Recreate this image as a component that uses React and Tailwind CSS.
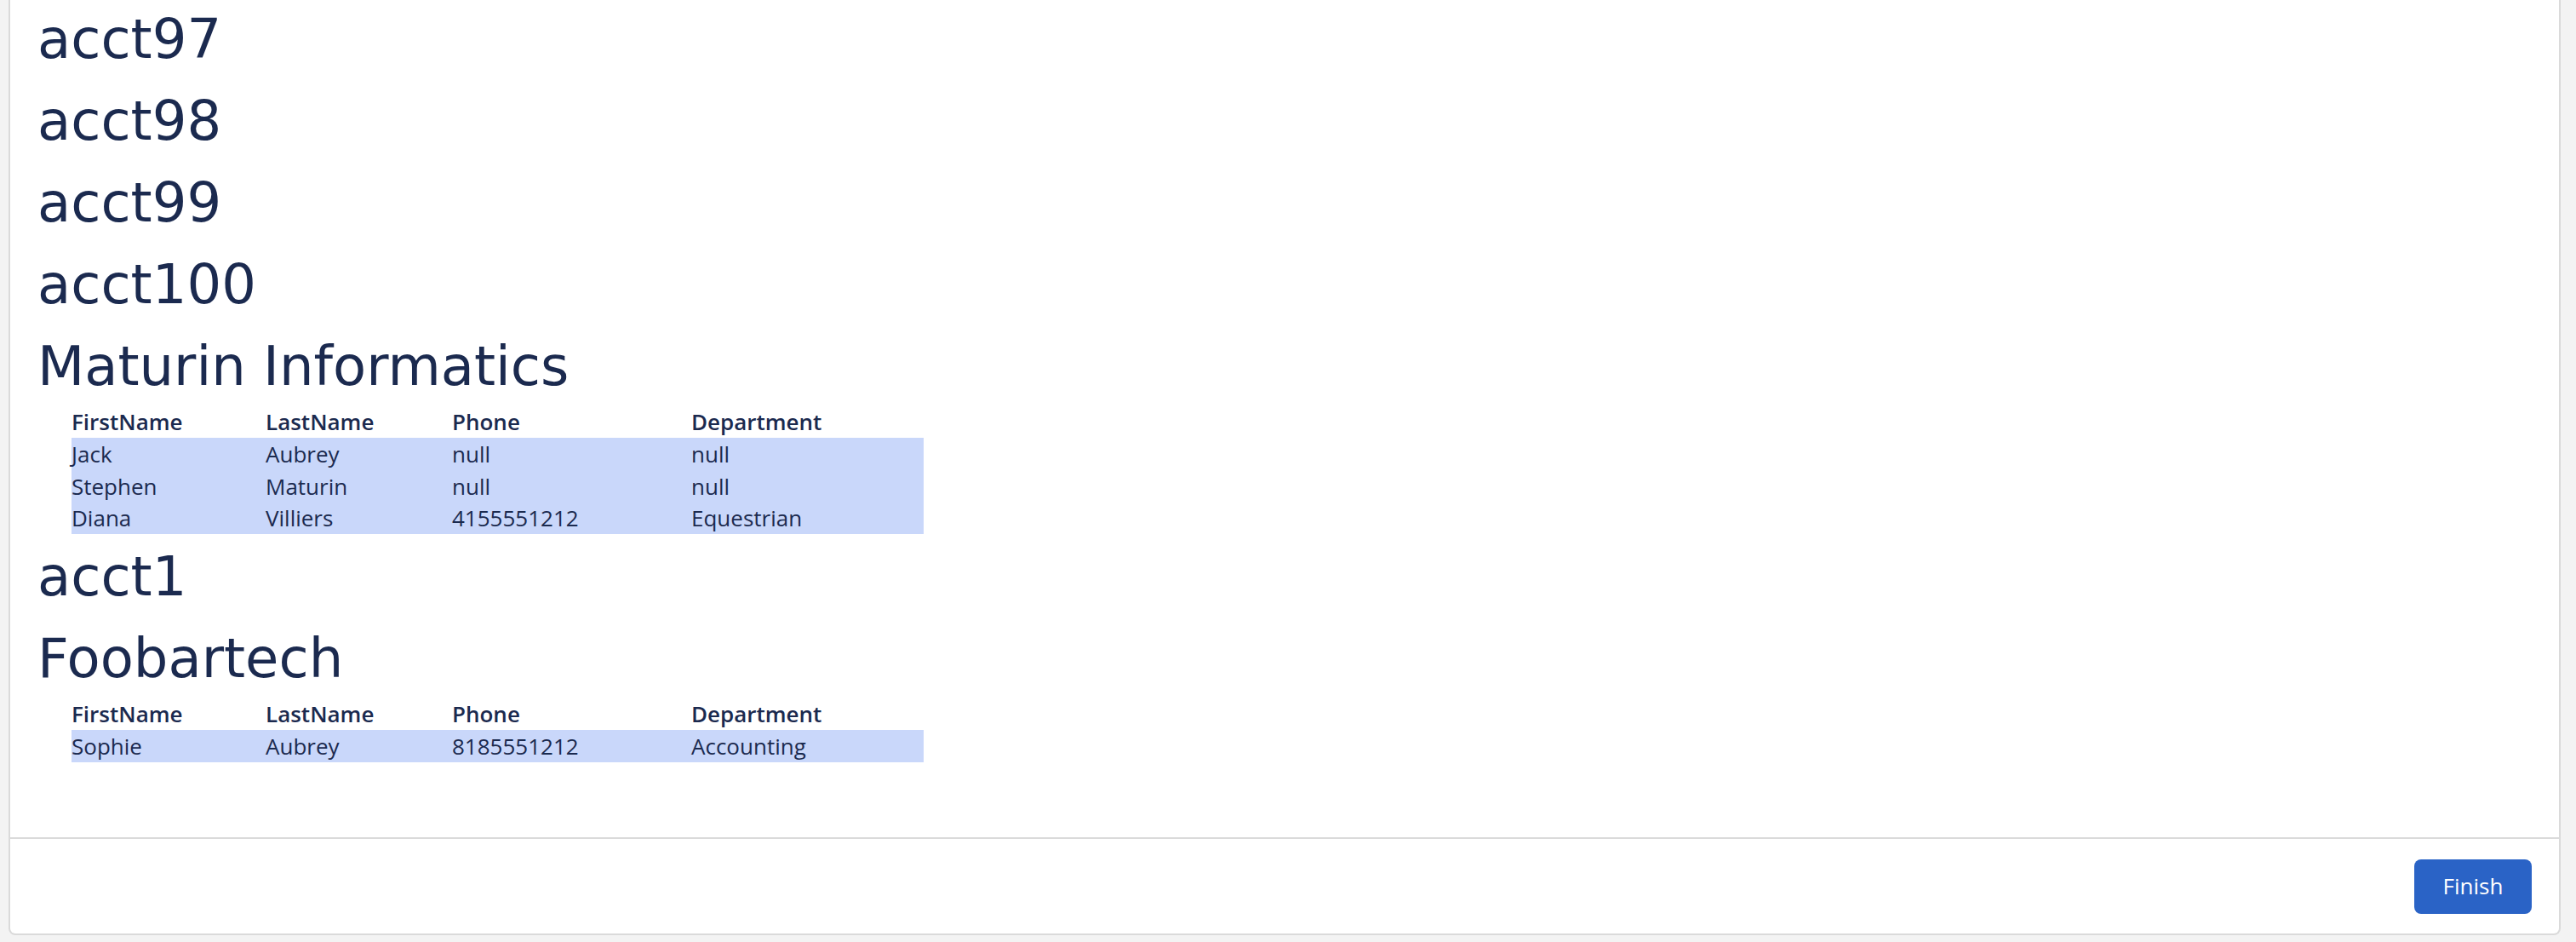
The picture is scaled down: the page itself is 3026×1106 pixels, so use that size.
const accounts = [
  { name: "acct97" },
  { name: "acct98" },
  { name: "acct99" },
  { name: "acct100" },
  {
    name: "Maturin Informatics",
    contacts: [
      { first: "Jack", last: "Aubrey", phone: "null", dept: "null" },
      { first: "Stephen", last: "Maturin", phone: "null", dept: "null" },
      { first: "Diana", last: "Villiers", phone: "4155551212", dept: "Equestrian" },
    ],
  },
  { name: "acct1" },
  {
    name: "Foobartech",
    contacts: [{ first: "Sophie", last: "Aubrey", phone: "8185551212", dept: "Accounting" }],
  },
];

const cols = "grid grid-cols-[228px_219px_281px_273px]";

function ContactTable({ contacts }) {
  return (
    <div className="ml-[40px] w-[1001px] font-['Open_Sans',sans-serif] text-[26px] leading-[38px] text-[#1b2a4f]">
      <div className={`${cols} h-[38px] font-semibold`}>
        <span>FirstName</span>
        <span>LastName</span>
        <span>Phone</span>
        <span>Department</span>
      </div>
      <div className="bg-[#c9d7fa]">
        {contacts.map((c) => (
          <div key={c.first} className={`${cols} h-[37.7px]`}>
            <span>{c.first}</span>
            <span>{c.last}</span>
            <span>{c.phone}</span>
            <span>{c.dept}</span>
          </div>
        ))}
      </div>
    </div>
  );
}

export default function App() {
  return (
    <div className="w-[3026px] h-[1106px] bg-[#f3f3f3] overflow-hidden">
      <div className="ml-[10px] w-[2998px] h-[1098px] bg-white border-2 border-t-0 border-[#dadada] rounded-b-[8px] flex flex-col">
        <div className="flex-1 overflow-hidden px-[32px]">
          <div className="-mt-[4px]">
            {accounts.map((a) => (
              <div key={a.name}>
                <h2 className="pt-[4px] font-['DejaVu_Sans',sans-serif] text-[64px] leading-[92px] text-[#1b2a4f]">
                  {a.name}
                </h2>
                {a.contacts && <ContactTable contacts={a.contacts} />}
              </div>
            ))}
          </div>
        </div>
        <div className="h-[113px] border-t-2 border-[#dadada] flex items-center justify-end pr-[32px]">
          <button className="w-[138px] h-[64px] rounded-[8px] bg-[#2a63c6] text-white font-['Open_Sans',sans-serif] text-[26px]">
            Finish
          </button>
        </div>
      </div>
    </div>
  );
}
